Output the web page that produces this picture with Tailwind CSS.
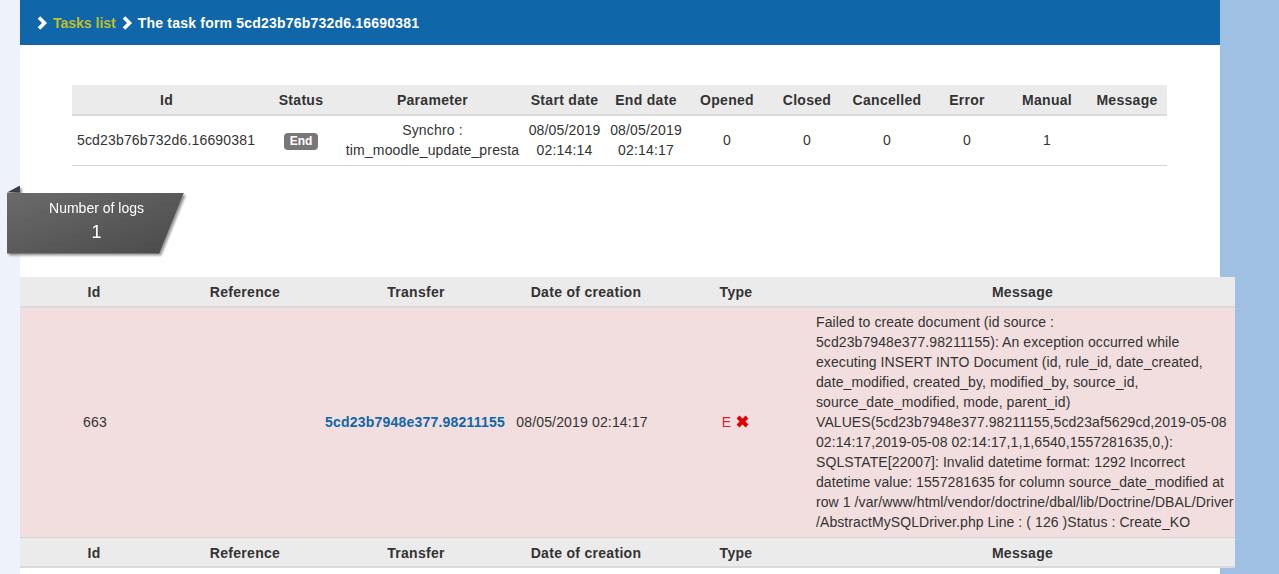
<!DOCTYPE html>
<html lang="en">

<head>
    <meta charset="UTF-8">
    <meta name="viewport" content="width=device-width, initial-scale=1.0">
    <title>Task</title>
    <script src="https://cdn.jsdelivr.net/npm/@tailwindcss/browser@4"></script>
</head>

<body class="bg-[#9fc0e3] h-screen overflow-hidden font-['Liberation_Sans',Arial,sans-serif] text-[14px] leading-5 tracking-[0.16px] text-[#333]">
    <div class="flex h-full">
        <div class="w-5 shrink-0 bg-[#eef2fb]"></div>

        <main class="w-[1200px] shrink-0 bg-white">
            <!-- Breadcrumb -->
            <header class="h-[45px] bg-[#0f67a9] flex items-center pl-[16px] font-bold tracking-[0.2px] text-white">
                <svg class="w-[12px] h-[14px] mr-[5px]" viewBox="0 0 12 14" fill="none" stroke="currentColor" stroke-width="3.6">
                    <path d="M3 1.5l5.5 5.5-5.5 5.5" />
                </svg>
                <a href="#" class="text-[#bfbf2a] tracking-normal">Tasks list</a>
                <svg class="w-[12px] h-[14px] ml-[5px] mr-[5px]" viewBox="0 0 12 14" fill="none" stroke="currentColor" stroke-width="3.6">
                    <path d="M3 1.5l5.5 5.5-5.5 5.5" />
                </svg>
                <span>The task form 5cd23b76b732d6.16690381</span>
            </header>

            <!-- Task table -->
            <table class="ml-[52px] mt-10 w-[1095px] table-fixed border-collapse">
                <colgroup>
                    <col class="w-[189px]">
                    <col class="w-[80px]">
                    <col class="w-[183px]">
                    <col class="w-[81px]">
                    <col class="w-[82px]">
                    <col class="w-[80px]">
                    <col class="w-[80px]">
                    <col class="w-[80px]">
                    <col class="w-[80px]">
                    <col class="w-[80px]">
                    <col class="w-[80px]">
                </colgroup>
                <thead>
                    <tr class="h-[30px] bg-[#ebebeb] border-b-2 border-[#dadada] font-bold tracking-[0.3px] text-center">
                        <th>Id</th>
                        <th>Status</th>
                        <th>Parameter</th>
                        <th>Start date</th>
                        <th>End date</th>
                        <th>Opened</th>
                        <th>Closed</th>
                        <th>Cancelled</th>
                        <th>Error</th>
                        <th>Manual</th>
                        <th>Message</th>
                    </tr>
                </thead>
                <tbody>
                    <tr class="h-[50px] border-b border-[#d4d4d4] text-center">
                        <td class="text-left pl-[5px]">5cd23b76b732d6.16690381</td>
                        <td>
                            <span class="inline-block bg-[#777] text-white text-[12px] font-bold leading-[17px] px-[6px] rounded-[4px] tracking-normal">End</span>
                        </td>
                        <td>Synchro :<br>tim_moodle_update_presta</td>
                        <td>08/05/2019<br>02:14:14</td>
                        <td>08/05/2019<br>02:14:17</td>
                        <td>0</td>
                        <td>0</td>
                        <td>0</td>
                        <td>0</td>
                        <td>1</td>
                        <td></td>
                    </tr>
                </tbody>
            </table>

            <!-- Logs counter -->
            <div class="relative -ml-[13px] mt-[27px] w-[177px] h-[62px] text-center text-white drop-shadow-[2px_2px_1px_rgba(0,0,0,0.4)]">
                <div class="absolute left-0 -top-[7px] w-[13px] h-[7px] bg-[#3d3d3d] [clip-path:polygon(100%_0,100%_100%,0_100%)]"></div>
                <div class="h-[61px] pt-[5px] pl-[2px] bg-gradient-to-br from-[#6b6b6b] to-[#4a4a4a] [clip-path:polygon(0_0,100%_0,86%_100%,0_100%)]">
                    <div class="tracking-normal">Number of logs</div>
                    <div class="mt-[2px] text-[18px] leading-6">1</div>
                </div>
            </div>

            <!-- Logs table -->
            <table class="relative mt-[22px] w-[1215px] max-w-[1215px] table-fixed border-collapse">
                <colgroup>
                    <col class="w-[148px]">
                    <col class="w-[154px]">
                    <col class="w-[188px]">
                    <col class="w-[152px]">
                    <col class="w-[148px]">
                    <col class="w-[425px]">
                </colgroup>
                <thead>
                    <tr class="h-[30px] bg-[#ebebeb] border-b-2 border-[#dadada] font-bold tracking-[0.3px] text-center [&>th]:pt-[2px]">
                        <th>Id</th>
                        <th>Reference</th>
                        <th>Transfer</th>
                        <th>Date of creation</th>
                        <th>Type</th>
                        <th>Message</th>
                    </tr>
                </thead>
                <tbody>
                    <tr class="bg-[#f2dede] border-b border-[#d4d4d4] text-center">
                        <td class="pl-[2px]">663</td>
                        <td></td>
                        <td class="pr-[2px]"><a href="#" class="font-bold tracking-[0.2px] text-[#0f67a9]">5cd23b7948e377.98211155</a></td>
                        <td class="pr-[8px]">08/05/2019 02:14:17</td>
                        <td class="text-[#d9232e] pr-[1px]">E
                            <svg class="inline-block w-[13px] h-[13px] ml-[1px] -mt-[3px] text-[#e00000]" viewBox="0 0 13 13" fill="none" stroke="currentColor" stroke-width="4">
                                <path d="M2 2l9 9M11 2l-9 9" />
                            </svg>
                        </td>
                        <td class="text-left pt-[4px] pb-[5px] pl-[6px] pr-0 tracking-[0.08px]">Failed to create document (id source :
                            5cd23b7948e377.98211155): An exception occurred while executing INSERT INTO Document (id, rule_id, date_created, date_modified, created_by, modified_by, source_id, source_date_modified, mode, parent_id)<br>VALUES(5cd23b7948e377.98211155,5cd23af5629cd,2019-05-08 02:14:17,2019-05-08 02:14:17,1,1,6540,1557281635,0,):<br>SQLSTATE[22007]: Invalid datetime format: 1292 Incorrect datetime value: 1557281635 for column source_date_modified at row 1 /var/www/html/vendor/doctrine/dbal/lib/Doctrine/DBAL/Driver<br>/AbstractMySQLDriver.php Line : ( 126 )Status : Create_KO</td>
                    </tr>
                </tbody>
                <tfoot>
                    <tr class="h-[30px] bg-[#ebebeb] border-b-2 border-[#dadada] font-bold tracking-[0.3px] text-center [&>th]:pt-[2px]">
                        <th>Id</th>
                        <th>Reference</th>
                        <th>Transfer</th>
                        <th>Date of creation</th>
                        <th>Type</th>
                        <th>Message</th>
                    </tr>
                </tfoot>
            </table>
        </main>
    </div>
</body>

</html>
